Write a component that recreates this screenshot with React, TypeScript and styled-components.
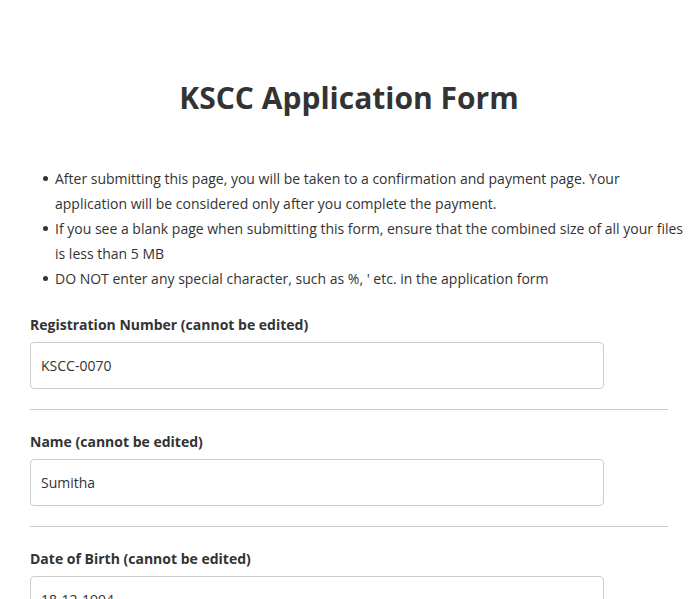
import styled, { createGlobalStyle } from "styled-components";

const GlobalStyle = createGlobalStyle`
  body {
    margin: 0;
    background: #fff;
    font-family: "Open Sans", "Liberation Sans", sans-serif;
    color: #333;
  }
`;

const fields = [
  { label: "Registration Number (cannot be edited)", value: "KSCC-0070" },
  { label: "Name (cannot be edited)", value: "Sumitha" },
  { label: "Date of Birth (cannot be edited)", value: "18-12-1994" },
];

const App = () => {
  return (
    <>
      <GlobalStyle />
      <Page>
        <Title>KSCC Application Form</Title>
        <Notes>
          <li>
            After submitting this page, you will be taken to a confirmation and
            payment page. Your application will be considered only after you
            complete the payment.
          </li>
          <li>
            If you see a blank page when submitting this form, ensure that the
            combined size of all your files is less than 5 MB
          </li>
          <li>
            DO NOT enter any special character, such as %, ' etc. in the
            application form
          </li>
        </Notes>
        {fields.map((f) => (
          <Field key={f.label}>
            <Label>{f.label}</Label>
            <Input value={f.value} readOnly />
          </Field>
        ))}
      </Page>
    </>
  );
};

const Page = styled.div`
  padding: 78px 30px 0;
  height: 599px;
  box-sizing: border-box;
  overflow: hidden;
`;

const Title = styled.h1`
  margin: 0 0 48px;
  text-align: center;
  font-size: 30px;
  font-weight: 700;
  line-height: 40px;
  color: #333;
`;

const Notes = styled.ul`
  margin: 0 -24px 24px 0;
  padding-left: 25px;
  list-style: none;
  font-size: 14px;
  line-height: 25px;
  color: #333;

  li {
    position: relative;
  }

  li::before {
    content: "";
    position: absolute;
    left: -12px;
    top: 10px;
    width: 5px;
    height: 5px;
    border-radius: 50%;
    background: #333;
  }
`;

const Field = styled.div`
  padding-bottom: 20px;
  margin-bottom: 22px;
  border-bottom: 1px solid #ccc;
`;

const Label = styled.div`
  font-size: 14px;
  font-weight: 700;
  line-height: 20px;
  color: #333;
  margin-bottom: 7px;
`;

const Input = styled.input`
  display: block;
  box-sizing: border-box;
  width: 90%;
  height: 47px;
  padding: 0 10px;
  border: 1px solid #ccc;
  border-radius: 4px;
  font-family: "Open Sans", "Liberation Sans", sans-serif;
  font-size: 14px;
  color: #333;
  background: #fff;
  outline: none;
`;

export default App;
